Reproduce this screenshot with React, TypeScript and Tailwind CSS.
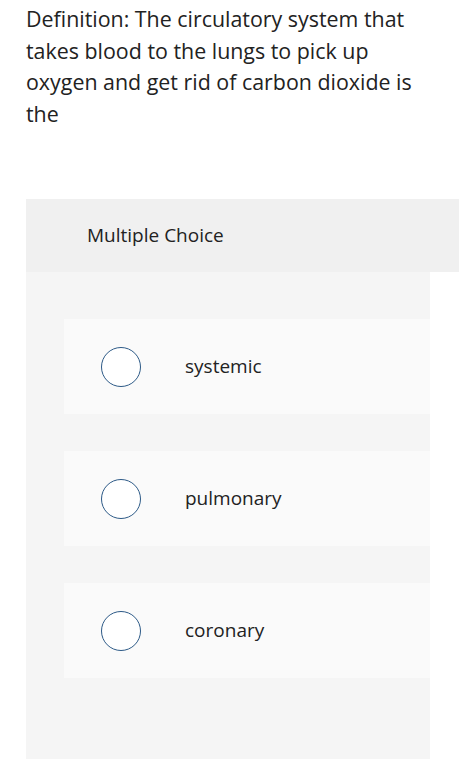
import React from "react";

const options = ["systemic", "pulmonary", "coronary"];

export default function App() {
  return (
    <div className="w-[474px] h-[767px] bg-white" style={{ fontFamily: '"Open Sans", "Liberation Sans", sans-serif' }}>
      <div className="ml-[26px] w-[408px] pt-[3px] text-[21.4px] leading-[31.5px] text-[#222]">
        Definition: The circulatory system that takes blood to the lungs to pick up oxygen and get rid of carbon dioxide is the
      </div>
      <div className="ml-[26px] mt-[70px] w-[433px]">
        <div className="h-[73px] bg-[#f0f0f0] flex items-center pl-[61px] text-[19px] text-[#222]">
          Multiple Choice
        </div>
        <div className="w-[404px] h-[487px] bg-[#f5f5f5] pt-[47px] pl-[38px] flex flex-col gap-[37px]">
          {options.map((o) => (
            <div key={o} className="h-[95px] bg-[#fafafa] flex items-center">
              <div className="ml-[37px] w-[40px] h-[40px] rounded-full border-[1.5px] border-[#2d5a87] bg-white" />
              <div className="ml-[44px] text-[19px] text-[#222]">{o}</div>
            </div>
          ))}
        </div>
      </div>
    </div>
  );
}
